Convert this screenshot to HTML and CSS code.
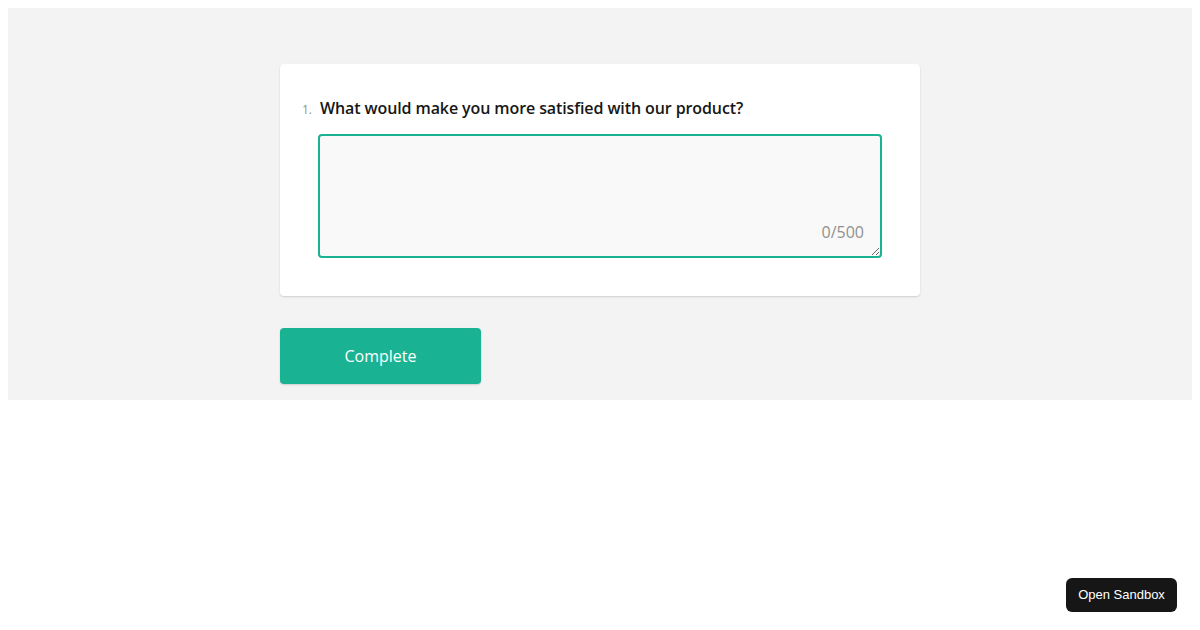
FILE: index.html
```html
<!DOCTYPE html>
<html>
<head>
<meta charset="utf-8">
<link rel="stylesheet" href="styles.css">
</head>
<body>
<div class="survey">
  <div class="page">
    <div class="card">
      <div class="title">
        <span class="num">1.</span>
        <span class="text">What would make you more satisfied with our product?</span>
      </div>
      <div class="comment">
        <textarea class="area"></textarea>
        <span class="counter">0/500</span>
      </div>
    </div>
    <div class="nav">
      <button class="complete">Complete</button>
    </div>
  </div>
</div>
<button class="sandbox">Open Sandbox</button>
</body>
</html>
```

FILE: styles.css
```css
html, body {
  margin: 0;
  padding: 0;
  background: #fff;
}
body {
  padding: 8px;
  font-family: "Open Sans", "Liberation Sans", sans-serif;
}
.survey {
  background: #f3f3f3;
  height: 392px;
  box-sizing: border-box;
  padding-top: 56px;
}
.page {
  width: 640px;
  margin-left: 272px;
}
.card {
  background: #fff;
  border-radius: 4px;
  box-shadow: 0 1px 2px rgba(0, 0, 0, 0.15);
  height: 232px;
  box-sizing: border-box;
  padding: 33px 38px 0 22px;
}
.title {
  display: flex;
  align-items: baseline;
}
.num {
  width: 18px;
  font-size: 12px;
  color: #909090;
  flex: none;
}
.text {
  font-size: 16px;
  font-weight: 600;
  color: #161616;
  line-height: 22px;
  letter-spacing: -0.1px;
}
.comment {
  position: relative;
  margin-top: 15px;
  margin-left: 16px;
  height: 124px;
}
.area {
  display: block;
  width: 100%;
  height: 124px;
  box-sizing: border-box;
  border: 2px solid #19b394;
  border-radius: 4px;
  background: #f9f9f9;
  outline: none;
  resize: vertical;
  font-family: inherit;
  font-size: 16px;
}
.counter {
  position: absolute;
  right: 18px;
  bottom: 15px;
  font-size: 16px;
  line-height: 22px;
  color: #909090;
}
.nav {
  margin-top: 32px;
}
.complete {
  width: 201px;
  height: 56px;
  border: none;
  border-radius: 4px;
  background: #19b394;
  color: #fff;
  font-family: "Open Sans", sans-serif;
  font-size: 16px;
  font-weight: 400;
  box-shadow: 0 1px 2px rgba(0, 0, 0, 0.15);
  cursor: pointer;
}
.sandbox {
  position: fixed;
  right: 23px;
  bottom: 18px;
  width: 111px;
  height: 34px;
  border: none;
  border-radius: 6px;
  background: #161616;
  color: #fff;
  font-family: "Liberation Sans", Arial, sans-serif;
  font-size: 13px;
  line-height: 15px;
  padding: 0 0 2px;
}
```
